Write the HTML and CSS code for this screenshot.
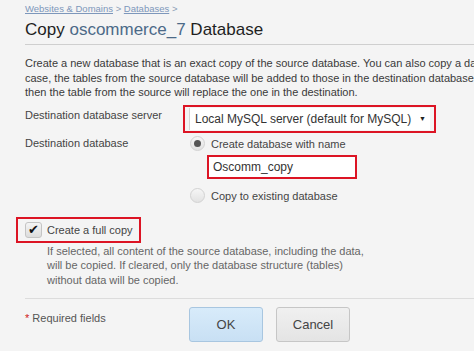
FILE: index.html
```html
<!DOCTYPE html>
<html lang="en">

<head>
  <meta charset="UTF-8" />
  <title>Copy Database</title>
  <link rel="stylesheet" href="styles.css">
</head>

<body>
  <div class="page">
    <div class="breadcrumbs">
      <a href="#">Websites &amp; Domains</a> &gt;
      <a href="#">Databases</a> &gt;
    </div>
    <h1>Copy <span class="db-name">oscommerce_7</span> Database</h1>

    <p class="hint">
      Create a new database that is an exact copy of the source database. You can also copy a database to an existing one. In this<br>
      case, the tables from the source database will be added to those in the destination database. If the tables have the same names,<br>
      then the table from the source will replace the one in the destination.
    </p>

    <form class="form">
      <div class="form-row">
        <div class="form-label">Destination database server</div>
        <div class="form-field">
          <div class="marked select-wrap">
            <div class="select">
              <span>Local MySQL server (default for MySQL)</span>
              <span class="arrow">&#9660;</span>
            </div>
          </div>
        </div>
      </div>

      <div class="form-row">
        <div class="form-label label-radio">Destination database</div>
        <div class="form-field">
          <label class="radio-line">
            <span class="radio checked"></span>
            Create database with name
          </label>
          <input class="text-input marked" type="text" value="Oscomm_copy" />
          <label class="radio-line second">
            <span class="radio"></span>
            Copy to existing database
          </label>
        </div>
      </div>

      <label class="full-copy marked">
        <span class="checkbox">&#10004;</span>
        Create a full copy
      </label>
      <div class="help">
        If selected, all content of the source database, including the data,<br>
        will be copied. If cleared, only the database structure (tables)<br>
        without data will be copied.
      </div>

      <div class="form-footer">
        <div class="required"><span class="star">*</span> Required fields</div>
        <div class="buttons">
          <button class="btn btn-ok" type="button">OK</button>
          <button class="btn" type="button">Cancel</button>
        </div>
      </div>
    </form>
  </div>
</body>

</html>
```

FILE: styles.css
```css
* {
  margin: 0;
  padding: 0;
  box-sizing: border-box;
}

body {
  background: #f4f4f4;
  font-family: 'Liberation Sans', Arial, sans-serif;
  font-size: 11px;
  color: #3a3a3a;
  overflow: hidden;
}

.page {
  width: 640px;
  padding-left: 25px;
}

.breadcrumbs {
  margin-top: 2px;
  height: 13px;
  font-size: 9.5px;
  line-height: 13px;
  color: #8a9cb4;
}

.breadcrumbs a {
  color: #7d97bb;
}

h1 {
  font-weight: normal;
  font-size: 17px;
  line-height: 26px;
  color: #1f1f1f;
  padding: 2px 0 1px;
  border-bottom: 1px solid #cfcfcf;
}

.db-name {
  color: #4c6a88;
}

.hint {
  margin-top: 11px;
  line-height: 14.5px;
  white-space: nowrap;
}

.marked {
  outline: 2px solid #dc1424;
}

.form {
  margin-top: 5px;
  color: #444;
}

.form-row {
  display: flex;
}

.form-label {
  width: 164px;
  flex-shrink: 0;
  padding-top: 4px;
}

.label-radio {
  padding-top: 1px;
}

.select-wrap {
  margin: 2px 0 0 -4px;
  padding: 1px 4px;
  width: 249px;
}

.select {
  display: flex;
  justify-content: space-between;
  align-items: center;
  height: 22px;
  padding: 0 4px 0 5px;
  background: #fff;
  border-left: 1px solid #d4d4d4;
  font-size: 12px;
  color: #333;
  white-space: nowrap;
}

.select .arrow {
  font-size: 7px;
  color: #222;
}

.form-row + .form-row {
  margin-top: 5px;
}

.form-field {
  display: flex;
  flex-direction: column;
  align-items: flex-start;
}

.radio-line {
  display: flex;
  align-items: center;
  gap: 6px;
  height: 16px;
  margin-left: 1px;
}

.radio-line.second {
  margin-top: 11px;
}

.radio {
  width: 15px;
  height: 15px;
  border-radius: 50%;
  border: 1px solid #d2d2d2;
  background: linear-gradient(#f6f6f6, #e2e2e2);
  display: flex;
  align-items: center;
  justify-content: center;
}

.radio.checked::after {
  content: "";
  width: 7px;
  height: 7px;
  border-radius: 50%;
  background: #555;
}

.text-input {
  margin: 5px 0 0 20px;
  width: 146px;
  height: 20px;
  border: none;
  padding: 0 4px;
  font-family: 'Liberation Sans', Arial, sans-serif;
  font-size: 12px;
  color: #333;
  background: #fff;
}

.full-copy {
  display: inline-flex;
  align-items: center;
  gap: 5px;
  margin: 15px 0 0 -7px;
  height: 22px;
  padding: 0 6px 0 7px;
  color: #444;
}

.checkbox {
  width: 17px;
  height: 16px;
  border: 1px solid #c4c4c4;
  border-radius: 3px;
  background: linear-gradient(#f4f4f4, #dcdcdc);
  font-size: 13px;
  line-height: 14px;
  text-align: center;
  color: #111;
}

.help {
  margin-top: 3px;
  padding-left: 22px;
  line-height: 14.5px;
  color: #666;
}

.form-footer {
  display: flex;
  margin-top: 11px;
  border-top: 1px solid #dcdcdc;
  padding-top: 8px;
}

.required {
  width: 164px;
  padding-top: 5px;
  color: #555;
}

.star {
  color: #d02020;
}

.buttons {
  display: flex;
  gap: 13px;
}

.btn {
  width: 74px;
  height: 35px;
  border: 1px solid #c6c6c6;
  border-radius: 3px;
  background: linear-gradient(#f0f0f0, #e4e4e4);
  font-family: 'Liberation Sans', Arial, sans-serif;
  font-size: 13px;
  color: #444;
}

.btn-ok {
  border-color: #a8c6e0;
  background: linear-gradient(#d8ebfa, #c8e0f4);
}
```
